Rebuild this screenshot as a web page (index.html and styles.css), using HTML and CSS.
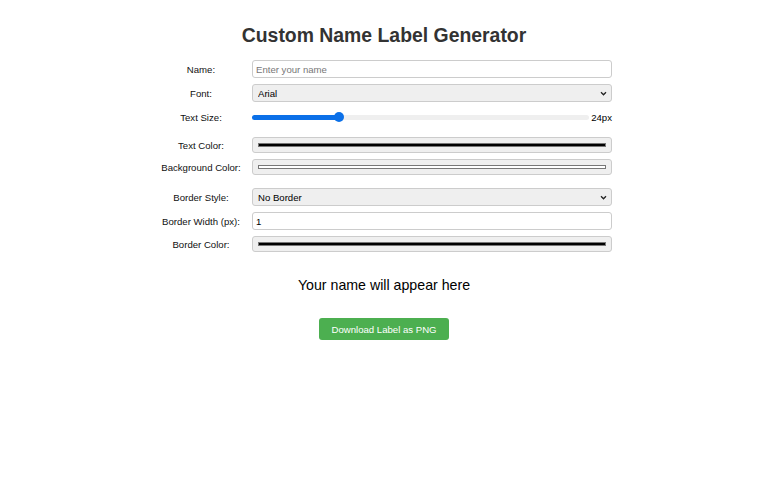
FILE: index.html
```html
<!DOCTYPE html>
<html>
<head>
<meta charset="utf-8">
<link rel="stylesheet" href="styles.css">
</head>
<body>
<div class="page">
  <h1 class="title">Custom Name Label Generator</h1>
  <div class="form">
    <label class="lbl">Name:</label>
    <input class="field text" type="text" placeholder="Enter your name">

    <label class="lbl">Font:</label>
    <select class="field sel"><option>Arial</option></select>

    <label class="lbl">Text Size:</label>
    <div class="range-wrap"><input class="range" type="range" min="8" max="72" value="24"><span class="rval">24px</span></div>

    <label class="lbl gap-a">Text Color:</label>
    <input class="field color gap-a" type="color" value="#000000">

    <label class="lbl">Background Color:</label>
    <input class="field color" type="color" value="#ffffff">

    <label class="lbl gap-b">Border Style:</label>
    <select class="field sel gap-b"><option>No Border</option></select>

    <label class="lbl">Border Width (px):</label>
    <input class="field text" type="number" value="1">

    <label class="lbl">Border Color:</label>
    <input class="field color" type="color" value="#000000">
  </div>
  <div class="preview">Your name will appear here</div>
  <div class="actions"><button class="btn">Download Label as PNG</button></div>
</div>
</body>
</html>
```
FILE: styles.css
```css
html, body { margin: 0; padding: 0; background: #fff; }
body { font-family: "Liberation Sans", Arial, sans-serif; color: #000; }
.page { display: flex; flex-direction: column; align-items: center; padding-top: 24px; }
.title { margin: 0 0 13px; font-size: 19.4px; font-weight: bold; color: #333; line-height: 23px; }
.form {
  display: grid;
  grid-template-columns: 90px 360px;
  column-gap: 6px;
  row-gap: 6px;
  align-items: center;
}
.lbl { font-size: 9.6px; text-align: center; white-space: nowrap; color: #111; }
.field { box-sizing: border-box; width: 360px; margin: 0; font-family: "Liberation Sans", Arial, sans-serif; font-size: 9.6px; }
.text { height: 18px; border: 1px solid #ccc; border-radius: 3px; padding: 1px 3px; background: #fff; color: #000; }
.text::placeholder { color: #777; }
.sel {
  height: 18px; border: 1px solid #ccc; border-radius: 3px; padding: 0 5px;
  -webkit-appearance: none; appearance: none;
  background-color: #efefef; color: #000;
  background-image: url("data:image/svg+xml;utf8,<svg xmlns='http://www.w3.org/2000/svg' width='8' height='6' viewBox='0 0 8 6'><path d='M1 1.5 L4 4.5 L7 1.5' fill='none' stroke='%23222' stroke-width='1.6'/></svg>");
  background-repeat: no-repeat;
  background-position: right 4px center;
  background-size: 7px 5px;
}
.range-wrap { display: flex; align-items: center; height: 18px; }
.range {
  flex: 1; margin: 0 2px 0 0; height: 18px;
  -webkit-appearance: none; appearance: none; background: transparent;
}
.range::-webkit-slider-runnable-track {
  height: 5px; border-radius: 3px;
  background: linear-gradient(to right, #0b70e8 0, #0b70e8 26%, #efefef 26%, #efefef 100%);
  border: none;
}
.range::-webkit-slider-thumb {
  -webkit-appearance: none; appearance: none;
  width: 10px; height: 10px; border-radius: 50%;
  background: #0b70e8; margin-top: -2.5px; border: none;
}
.rval { font-size: 9.6px; }
.color { height: 16px; border: 1px solid #ccc; border-radius: 3px; padding: 1px 3px; background: #efefef; }
.form .gap-a { margin-top: 5px; }
.form .gap-b { margin-top: 7px; }
.preview { margin-top: 24px; font-size: 14.2px; line-height: 18px; }
.actions { margin-top: 24px; }
.btn { background: #4CAF50; color: #fff; border: none; border-radius: 3px; font-family: "Liberation Sans", Arial, sans-serif; font-size: 9.6px; white-space: nowrap; padding: 0; height: 22px; width: 130px; }
```
